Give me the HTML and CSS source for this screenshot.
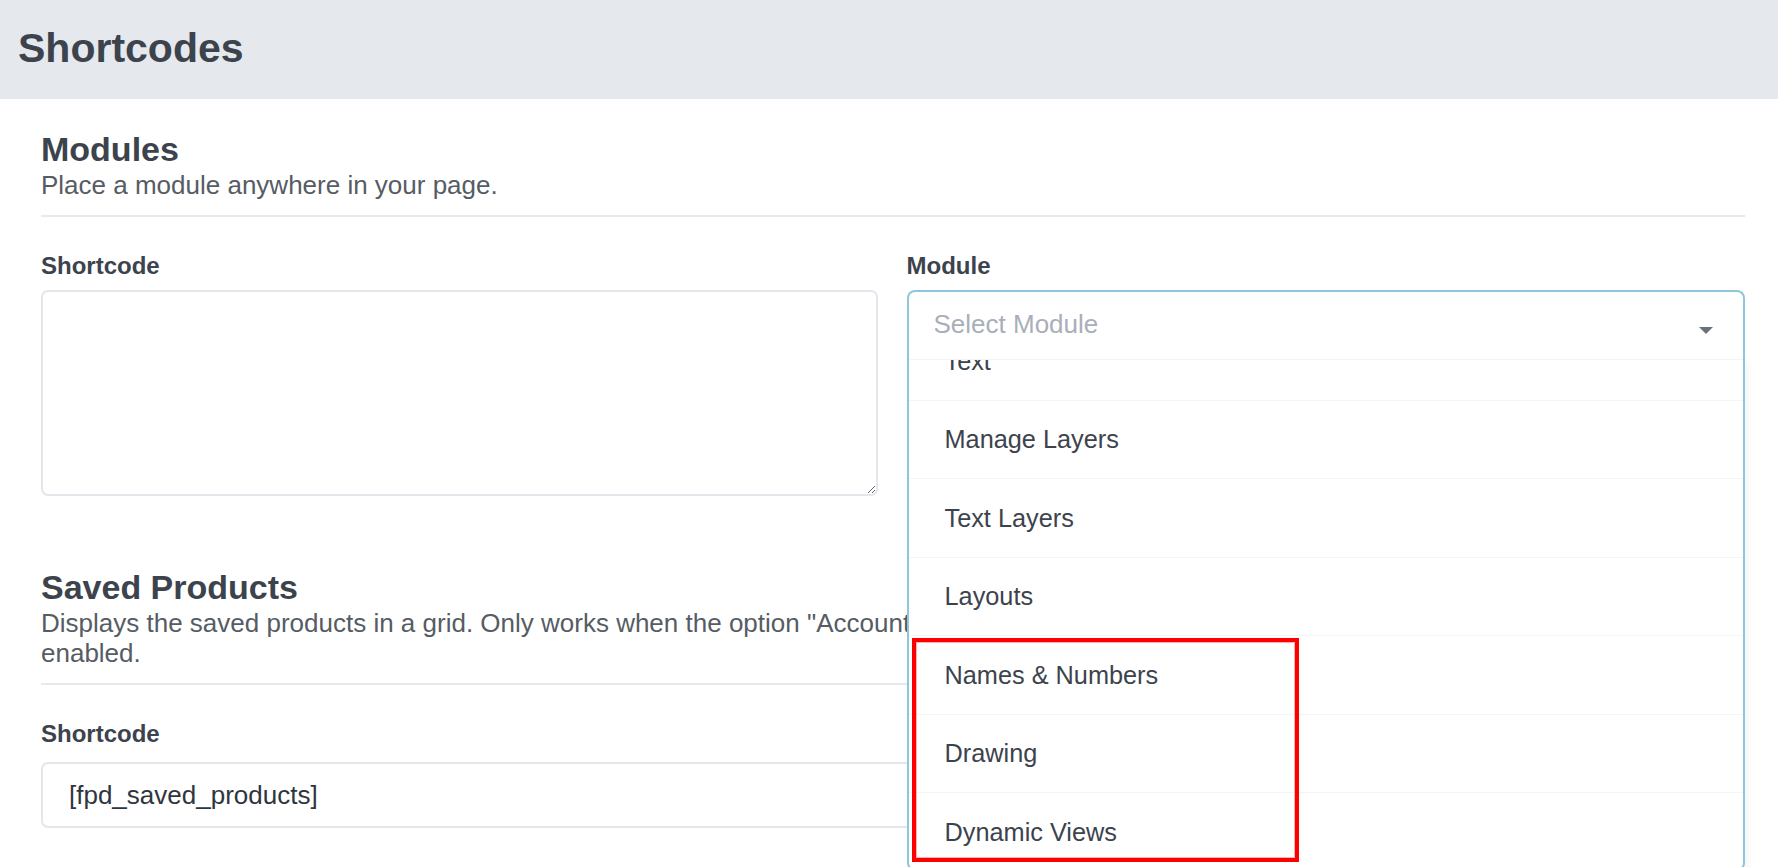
FILE: index.html
```html
<!DOCTYPE html>
<html lang="en">
<head>
<meta charset="utf-8">
<title>Shortcodes</title>
<link rel="stylesheet" href="styles.css">
</head>
<body>
<header class="page-header">
  <h1 class="page-title">Shortcodes</h1>
</header>
<main class="content">
  <section class="section">
    <h2 class="section-title">Modules</h2>
    <p class="section-desc">Place a module anywhere in your page.</p>
    <hr class="divider">
    <div class="field-grid">
      <div class="field">
        <label class="field-label">Shortcode</label>
        <textarea class="textarea"></textarea>
      </div>
      <div class="field">
        <label class="field-label">Module</label>
        <div class="select">
          <div class="select-head">
            <span class="placeholder">Select Module</span>
            <span class="caret"></span>
          </div>
          <div class="menu">
            <div class="menu-viewport">
              <ul class="options">
                <li class="option">Text</li>
                <li class="option">Manage Layers</li>
                <li class="option">Text Layers</li>
                <li class="option">Layouts</li>
                <li class="option">Names &amp; Numbers</li>
                <li class="option">Drawing</li>
                <li class="option">Dynamic Views</li>
              </ul>
            </div>
            <div class="highlight"></div>
          </div>
        </div>
      </div>
    </div>
  </section>
  <section class="section saved">
    <h2 class="section-title">Saved Products</h2>
    <p class="section-desc">Displays the saved products in a grid. Only works when the option "Account Product Storage" is<br>enabled.</p>
    <hr class="divider">
    <label class="field-label label-spaced">Shortcode</label>
    <div class="input">[fpd_saved_products]</div>
  </section>
</main>
</body>
</html>
```

FILE: styles.css
```css
* { box-sizing: border-box; }

html, body {
  margin: 0;
  padding: 0;
  background: #ffffff;
  font-family: "Liberation Sans", Arial, Helvetica, sans-serif;
  color: #3c434d;
}

body {
  width: 1778px;
  height: 867px;
  overflow: hidden;
}

.page-header {
  background: #e5e8ed;
  height: 99px;
  padding: 24px 0 0 18px;
}

.page-title {
  margin: 0;
  font-size: 41px;
  line-height: 48px;
  font-weight: 700;
  color: #3c434d;
}

.content {
  padding: 0 33px 0 41px;
}

.section-title {
  margin: 30px 0 0;
  font-size: 34px;
  line-height: 40px;
  font-weight: 700;
  color: #3c434d;
}

.section-desc {
  margin: 1px 0 0;
  font-size: 26px;
  line-height: 30px;
  color: #565c64;
}

.divider {
  margin: 15px 0 0;
  border: 0;
  height: 2px;
  background: #e6e9ed;
}

.field-grid {
  margin-top: 35px;
  display: grid;
  grid-template-columns: 1fr 1fr;
  column-gap: 27px;
}

.field {
  display: flex;
  flex-direction: column;
}

.field-label {
  display: block;
  font-size: 24px;
  line-height: 28px;
  font-weight: 700;
  color: #3c434d;
  margin-bottom: 10px;
}

.textarea {
  display: block;
  width: 837px;
  height: 206px;
  margin: 0;
  border: 2px solid #e3e6ea;
  border-radius: 7px;
  background: #fff;
  font: inherit;
  resize: both;
}

.select {
  position: relative;
  border: 2px solid #90c6db;
  border-bottom: 0;
  border-radius: 8px 8px 0 0;
  background: #fff;
}

.select-head {
  height: 67px;
  padding: 17px 30px 0 25px;
  display: flex;
  justify-content: space-between;
}

.placeholder {
  font-size: 26px;
  line-height: 30px;
  color: #a8afba;
}

.caret {
  margin-top: 18px;
  width: 0;
  height: 0;
  border-left: 7.5px solid transparent;
  border-right: 7.5px solid transparent;
  border-top: 7px solid #6b717b;
}

.menu {
  position: absolute;
  top: 100%;
  left: -2px;
  right: -2px;
  height: 512px;
  border: 2px solid #90c6db;
  border-top: 0;
  border-radius: 0 0 8px 8px;
  background: #fff;
  box-shadow: 3px 3px 8px rgba(0, 0, 0, 0.05);
  z-index: 5;
}

.menu-viewport {
  height: 100%;
  overflow: hidden;
  border-top: 1px solid #f4f5f6;
}

.options {
  list-style: none;
  margin: -38px 0 0;
  padding: 0;
}

.option {
  height: 78.5px;
  display: flex;
  align-items: center;
  padding-left: 36px;
  border-bottom: 1px solid #f3f4f5;
  font-size: 25.3px;
  line-height: 30px;
  color: #3c434d;
}

.highlight {
  position: absolute;
  left: 3px;
  top: 279px;
  width: 387px;
  height: 224px;
  border: 4px solid #ff0000;
  box-shadow: inset 0 0 0 1px #ffb0b0;
  pointer-events: none;
}

.saved .section-title {
  margin-top: 71px;
}

.label-spaced {
  margin-top: 35px;
  margin-bottom: 0;
}

.input {
  margin-top: 14px;
  height: 66px;
  border: 2px solid #e3e6ea;
  border-radius: 7px;
  padding: 0 0 0 26px;
  display: flex;
  align-items: center;
  font-size: 26px;
  line-height: 30px;
  color: #2f353d;
}
```
